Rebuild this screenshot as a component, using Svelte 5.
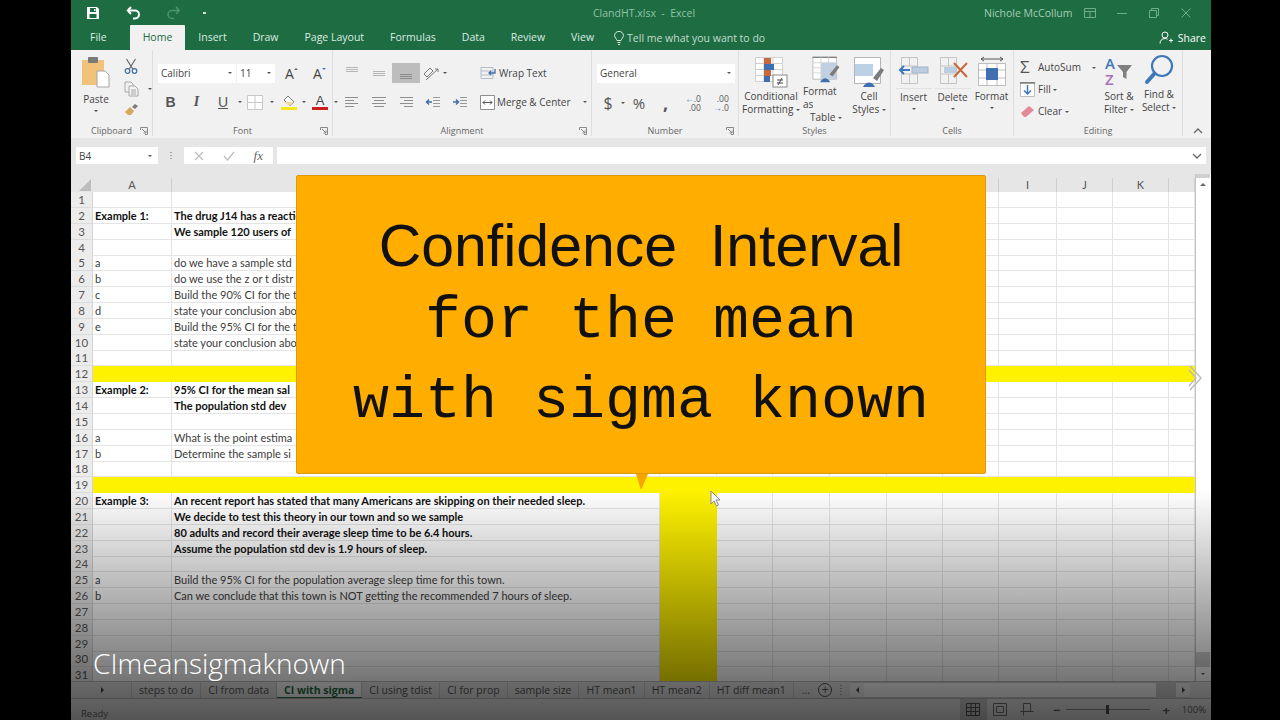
<script>
	const tabs = ['Insert', 'Draw', 'Page Layout', 'Formulas', 'Data', 'Review', 'View'];
	const columns = ['A', 'B', 'C', 'D', 'E', 'F', 'G', 'H', 'I', 'J', 'K', ''];
	const sheets = ['steps to do', 'CI from data', 'CI with sigma', 'CI using tdist', 'CI for prop', 'sample size', 'HT mean1', 'HT mean2', 'HT diff mean1'];

	// only the rows that hold something, the rest stay blank
	const cells = {
		2: ['Example 1:', 'The drug J14 has a reaction', true],
		3: ['', 'We sample 120 users of', true],
		5: ['a', 'do we have a sample std'],
		6: ['b', 'do we use the z or t distr'],
		7: ['c', 'Build the 90% CI for the t'],
		8: ['d', 'state your conclusion abo'],
		9: ['e', 'Build the 95% CI for the t'],
		10: ['', 'state your conclusion abo'],
		13: ['Example 2:', '95% CI for the mean sal', true],
		14: ['', 'The population std dev', true],
		16: ['a', 'What is the point estima'],
		17: ['b', 'Determine the sample si'],
		20: ['Example 3:', 'An recent report has stated that many Americans are skipping on their needed sleep.', true],
		21: ['', 'We decide to test this theory in our town and so we sample', true],
		22: ['', '80 adults and record their average sleep time to be 6.4 hours.', true],
		23: ['', 'Assume the population std dev is 1.9 hours of sleep.', true],
		25: ['a', 'Build the 95% CI for the population average sleep time for this town.'],
		26: ['b', 'Can we conclude that this town is NOT getting the recommended 7 hours of sleep.']
	};
	const rows = Array.from({ length: 31 }, (_, i) => i + 1);
	const blanks = Array.from({ length: 10 }, (_, i) => i);
</script>

{#snippet caret()}
	<span class="caret"></span>
{/snippet}

{#snippet launcher()}
	<svg class="launcher" width="8" height="8" viewBox="0 0 8 8" fill="none" stroke="#8a8a8a"><path d="M.5 3V.5H7.5V7.5H5M2 2l4 4M6 3.5V6H3.5"/></svg>
{/snippet}

{#snippet lines(kind)}
	<svg width="16" height="14" viewBox="0 0 16 14" stroke="#8f8f8f" fill="none">
		{#if kind === 'left'}
			<path d="M1 2.5h13M1 5.5h9M1 8.5h13M1 11.5h9"/>
		{:else if kind === 'center'}
			<path d="M1 2.5h14M3 5.5h10M1 8.5h14M3 11.5h10"/>
		{:else}
			<path d="M2 2.5h13M6 5.5h9M2 8.5h13M6 11.5h9"/>
		{/if}
	</svg>
{/snippet}

<div class="page">
	<div class="window">
		<header class="titlebar">
			<div class="qat">
				<svg class="qa-save" width="14" height="14" viewBox="0 0 14 14"><path fill="#fff" d="M1 1h10l2 2v10H1z"/><path fill="#1e6c42" d="M4 2h6v4H4zM3.500 8h7v4h-7z"/><path fill="#fff" d="M8 3h1.500v2H8z"/></svg>
				<svg class="qa-undo" width="16" height="14" viewBox="0 0 16 14" fill="none" stroke="#fff" stroke-width="2"><path d="M5 1 1.800 4.500 5 8"/><path d="M2 4.500h7a4 4 0 0 1 0 8H7"/></svg>
				<svg class="qa-redo" width="16" height="14" viewBox="0 0 16 14" fill="none" stroke="#4d9570" stroke-width="1.500"><path d="M11 1l3.200 3.500L11 8"/><path d="M14 4.500H7a4 4 0 0 0 0 8h2"/></svg>
				<span class="qa-more"></span>
			</div>
			<div class="doc-title">ClandHT.xlsx&nbsp; - &nbsp;Excel</div>
			<div class="user">Nichole McCollum</div>
			<div class="win-buttons">
				<svg width="12" height="10" viewBox="0 0 12 10" fill="none" stroke="#6fae8c"><path d="M.5.500h11v9H.5zM.5 3.500h11M6 3.500v6"/></svg>
				<svg width="12" height="10" viewBox="0 0 12 10" fill="none" stroke="#6fae8c"><path d="M1 5.500h10"/></svg>
				<svg width="12" height="10" viewBox="0 0 12 10" fill="none" stroke="#6fae8c"><path d="M1.500 2.500h7v7h-7zM3.500 2.500v-2h7v7h-2"/></svg>
				<svg width="12" height="10" viewBox="0 0 12 10" fill="none" stroke="#6fae8c"><path d="M1.500.500l9 9M10.500.500l-9 9"/></svg>
			</div>
		</header>

		<nav class="tabbar">
			<span class="tab file">File</span>
			<span class="tab active">Home</span>
			{#each tabs as tab}
				<span class="tab">{tab}</span>
			{/each}
			<svg class="bulb" width="10" height="14" viewBox="0 0 10 14" fill="none" stroke="#d5e8dd"><path d="M3 9.500C2.500 7.500.600 6.800.600 4.500a4.400 4.100 0 0 1 8.800 0C9.400 6.800 7.500 7.500 7 9.500zM3.500 11.500h3M4 13.500h2"/></svg>
			<span class="tell">Tell me what you want to do</span>
			<div class="share">
				<svg width="14" height="13" viewBox="0 0 14 13" fill="none" stroke="#fff"><circle cx="6" cy="4" r="3"/><path d="M1 12.500c0-3 2-5 5-5 1 0 2 .3 2.500.8M10 9.500h4M12 7.500v4"/></svg>
				<span>Share</span>
			</div>
		</nav>

		<section class="ribbon">
			<div class="group clipboard">
				<div class="body">
					<div class="paste">
						<svg width="30" height="32" viewBox="0 0 30 32">
							<rect x="1" y="4" width="22" height="25" fill="#f0c27a"/>
							<rect x="7" y="1" width="10" height="6" rx="1" fill="#7a7a7a"/>
							<path d="M16 15h8l4 4v12H16z" fill="#fff" stroke="#a6a6a6"/>
						</svg>
						<span class="label">Paste</span>
						{@render caret()}
					</div>
					<div class="clip-tools">
						<svg width="14" height="16" viewBox="0 0 14 16" fill="none" stroke="#3f6fa8" stroke-width="1.200"><circle cx="3.500" cy="13" r="2.300"/><circle cx="10.500" cy="13" r="2.300"/><path stroke="#666" d="M2.500 1l6.300 10M11.500 1 5.200 11"/></svg>
						<div class="copy-row">
							<svg width="15" height="16" viewBox="0 0 15 16" fill="none" stroke="#a8a8a8"><path d="M1 1h6l2 2v8H1z"/><path fill="#f1f1f1" d="M5 5h6l3 3v7H5z"/><path d="M7 9h5M7 11h5M7 13h5"/></svg>
							{@render caret()}
						</div>
						<svg width="14" height="12" viewBox="0 0 14 12"><path fill="#d9a860" d="M1 8l5-5 4 4-3 4H4z"/><path fill="#7b7b7b" d="M8 3l3-3 3 2-3 3z"/></svg>
					</div>
				</div>
				<div class="foot"><span>Clipboard</span>{@render launcher()}</div>
			</div>

			<div class="group font">
				<div class="body stack">
					<div class="row first font-row1">
						<div class="select name">Calibri<span class="caret"></span></div>
						<div class="select size">11<span class="caret"></span></div>
						<span class="grow">A<i></i></span>
						<span class="grow shrink">A<i></i></span>
					</div>
					<div class="row font-row2">
						<b class="fmt">B</b>
						<i class="fmt italic">I</i>
						<span class="fmt under">U</span>
						{@render caret()}
						<svg width="16" height="15" viewBox="0 0 16 15" fill="#fff" stroke="#c8c8c8"><path d="M.500.500h15v14H.500zM8 .500v14M.500 7.500h15"/></svg>
						{@render caret()}
						<div class="swatch">
							<svg width="14" height="12" viewBox="0 0 14 12"><path d="M6 1l6 6-4 4-6-6z" fill="#fff" stroke="#7a7a7a"/><path d="M2 7l6 4 4-4z" fill="#ebdf9a"/></svg>
							<span class="bar yellow"></span>
						</div>
						{@render caret()}
						<div class="swatch">
							<span class="fa">A</span>
							<span class="bar red"></span>
						</div>
						{@render caret()}
					</div>
				</div>
				<div class="foot"><span>Font</span>{@render launcher()}</div>
			</div>

			<div class="group alignment">
				<div class="body stack">
					<div class="row first align-row1">
						<svg width="16" height="14" viewBox="0 0 16 14" stroke="#b5b5b5" fill="none"><path d="M2 1.500h12M2 3.500h12M2 5.500h12"/></svg>
						<svg width="16" height="14" viewBox="0 0 16 14" stroke="#b5b5b5" fill="none"><path d="M2 5.500h12M2 7.500h12M2 9.500h12"/></svg>
						<div class="picked"><svg width="16" height="14" viewBox="0 0 16 14" stroke="#8c8c8c" fill="none"><path d="M2 8.500h12M2 10.500h12M2 12.500h12"/></svg></div>
						<div class="orient">
							<svg width="18" height="16" viewBox="0 0 18 16" fill="none" stroke="#7a7a7a"><path d="M1 9l6-6 3 3-6 6zM3 15 15 4M12 4h3v3"/></svg>
							{@render caret()}
						</div>
						<div class="wide-tool wrap">
							<svg width="17" height="14" viewBox="0 0 17 14" fill="none" stroke="#b3bccb"><path d="M1 1.500h12v11H1zM1 5h12M1 9h12"/><path stroke="#3f6fa8" stroke-width="1.300" d="M15 3v4H9M11 5 9 7l2 2"/></svg>
							<span>Wrap Text</span>
						</div>
					</div>
					<div class="row align-row2">
						{@render lines('left')}
						{@render lines('center')}
						{@render lines('right')}
						<svg width="16" height="14" viewBox="0 0 16 14" fill="none" stroke="#9a9a9a"><path d="M8 2.500h7M8 5.500h7M8 8.500h7M8 11.500h7"/><path stroke="#3f6fa8" stroke-width="1.500" d="M7 7H2M4 4.500 1.500 7 4 9.500"/></svg>
						<svg width="16" height="14" viewBox="0 0 16 14" fill="none" stroke="#9a9a9a"><path d="M8 2.500h7M8 5.500h7M8 8.500h7M8 11.500h7"/><path stroke="#3f6fa8" stroke-width="1.500" d="M1 7h5M4 4.500 6.500 7 4 9.500"/></svg>
						<div class="wide-tool merge">
							<svg width="15" height="15" viewBox="0 0 15 15" fill="#fff" stroke="#8f8f8f"><path d="M.500.500h14v14H.500z"/><path stroke="#555" d="M3 7.500h9M5 5.500l-2 2 2 2M10 5.500l2 2-2 2"/></svg>
							<span>Merge &amp; Center</span>
							{@render caret()}
						</div>
					</div>
				</div>
				<div class="foot"><span>Alignment</span>{@render launcher()}</div>
			</div>

			<div class="group number">
				<div class="body stack">
					<div class="row first">
						<div class="select general">General<span class="caret"></span></div>
					</div>
					<div class="row number-row2">
						<span class="dollar">$</span>
						{@render caret()}
						<span class="percent">%</span>
						<span class="comma">,</span>
						<div class="decimals"><span><em>←</em>.0</span><span>.00</span></div>
						<div class="decimals"><span>.00</span><span><em>→</em>.0</span></div>
					</div>
				</div>
				<div class="foot"><span>Number</span>{@render launcher()}</div>
			</div>

			<div class="group styles">
				<div class="body">
					<div class="big cond">
						<svg width="34" height="32" viewBox="0 0 34 32">
							<path d="M1.500 1.500h27v24h-27zM10 1.500v24M19 1.500v24M1.500 7.500h27M1.500 13.500h27M1.500 19.500h27" fill="#fff" stroke="#cfcfcf"/>
							<rect x="10" y="2" width="7" height="6" fill="#c9683a"/>
							<rect x="10" y="8" width="10" height="6" fill="#3f6fb0"/>
							<rect x="10" y="14" width="7" height="6" fill="#c9683a"/>
							<rect x="10" y="20" width="6" height="6" fill="#3f6fb0"/>
							<rect x="19" y="19" width="14" height="12" fill="#fff" stroke="#8a8a8a"/>
							<path d="M23 24h6M23 27h6M28 22l-4 7" stroke="#444" fill="none"/>
						</svg>
						<span>Conditional</span>
						<span>Formatting {@render caret()}</span>
					</div>
					<div class="big table">
						<svg width="34" height="32" viewBox="0 0 34 32">
							<path d="M1.500 1.500h28v26h-28z" fill="#fff" stroke="#b5b5b5"/>
							<path d="M1 1.500h29" stroke="#555"/>
							<rect x="11" y="8" width="18" height="19" fill="#bcd0e6"/>
							<path d="M1.500 8h28M1.500 14h28M1.500 20h28M11 1.500v26M20 1.500v26" stroke="#cfcfcf" fill="none"/>
							<path d="M10 31c3-6 9-6 12 0z" fill="#3f6fb0"/>
							<path d="M21 22l9-11 3 2-8 11z" fill="#7b7b7b"/>
						</svg>
						<span>Format as</span>
						<span>Table {@render caret()}</span>
					</div>
					<div class="big cell">
						<svg width="32" height="32" viewBox="0 0 32 32">
							<path d="M1.500 1.500h26v26h-26z" fill="#fff" stroke="#b5b5b5"/>
							<rect x="2" y="8" width="18" height="12" fill="#bcd0e6"/>
							<path d="M10 31c3-6 9-6 12 0z" fill="#3f6fb0"/>
							<path d="M20 22l8-10 3 2-7 11z" fill="#7b7b7b"/>
						</svg>
						<span>Cell</span>
						<span>Styles {@render caret()}</span>
					</div>
				</div>
				<div class="foot center"><span>Styles</span></div>
			</div>

			<div class="group cellsgroup">
				<div class="body">
					<div class="big split">
						<svg width="32" height="30" viewBox="0 0 32 30" fill="none">
							<path d="M3.500 1.500h16v26h-16zM3.500 10h16M3.500 18h16M11.500 1.500V10M11.500 18v9.500" stroke="#c4c4c4"/>
							<rect x="14" y="11" width="16" height="6" fill="#bccde0" stroke="#9fb2c8"/>
							<path d="M12 14H2M6 10 2 14l4 4" stroke="#3f78b8" stroke-width="2"/>
						</svg>
						<span class="rule"></span>
						<span>Insert</span>
						{@render caret()}
					</div>
					<div class="big split">
						<svg width="32" height="30" viewBox="0 0 32 30" fill="none">
							<path d="M3.500 1.500h16v26h-16zM3.500 10h16M3.500 18h16M11.500 1.500V10M11.500 18v9.500" stroke="#c4c4c4"/>
							<rect x="7" y="11" width="12" height="6" fill="#bccde0"/>
							<path d="M17 7l13 14M30 7 17 21" stroke="#c9683a" stroke-width="2"/>
						</svg>
						<span class="rule"></span>
						<span>Delete</span>
						{@render caret()}
					</div>
					<div class="big format">
						<svg width="30" height="32" viewBox="0 0 30 32" fill="none">
							<path d="M4 3h22M7 1 4 3l3 2M23 1l3 2-3 2" stroke="#555"/>
							<path d="M1.500 7.500h27v22h-27zM10 7.500v22M20 7.500v22M1.500 14h27M1.500 22h27" fill="#fff" stroke="#bdbdbd"/>
							<rect x="9" y="12" width="12" height="12" fill="#3f6fb0"/>
						</svg>
						<span>Format</span>
						{@render caret()}
					</div>
				</div>
				<div class="foot center"><span>Cells</span></div>
			</div>

			<div class="group editing">
				<div class="body">
					<div class="edit-col">
						<div class="edit-row"><span class="sigma">Σ</span><span>AutoSum</span><span class="push">{@render caret()}</span></div>
						<div class="edit-row">
							<svg width="15" height="15" viewBox="0 0 15 15" fill="none"><path d="M.500.500h14v14H.500z" fill="#fff" stroke="#bdbdbd"/><path d="M0 1h15" stroke="#444"/><path d="M7.500 3v9M4 8.500l3.500 3.500L11 8.500" stroke="#3f78b8" stroke-width="1.500"/></svg>
							<span>Fill {@render caret()}</span>
						</div>
						<div class="edit-row">
							<svg width="15" height="13" viewBox="0 0 15 13"><path d="M1 8l8-7 5 4-8 7H4z" fill="#e28a96"/></svg>
							<span>Clear {@render caret()}</span>
						</div>
					</div>
					<div class="big sort">
						<div class="az">
							<span class="a">A</span><span class="z">Z</span>
							<svg width="16" height="16" viewBox="0 0 16 16"><path d="M0 1h15L9.500 8v7L6 13V8z" fill="#808080"/></svg>
						</div>
						<span>Sort &amp;</span>
						<span>Filter {@render caret()}</span>
					</div>
					<div class="big find">
						<svg width="30" height="32" viewBox="0 0 30 32" fill="none"><circle cx="18" cy="12" r="10" stroke="#3f78b8" stroke-width="2.200"/><path d="M10.500 19.500 3 28" stroke="#3f78b8" stroke-width="4" stroke-linecap="round"/></svg>
						<span>Find &amp;</span>
						<span>Select {@render caret()}</span>
					</div>
				</div>
				<div class="foot center"><span>Editing</span></div>
			</div>

			<svg class="collapse" width="10" height="6" viewBox="0 0 10 6" fill="none" stroke="#666" stroke-width="1.300"><path d="M1 5l4-4 4 4"/></svg>
		</section>

		<section class="formulabar">
			<div class="namebox">B4<span class="caret"></span></div>
			<span class="grip"></span>
			<div class="fx-box">
				<svg width="10" height="10" viewBox="0 0 10 10" stroke="#bcbcbc" fill="none" stroke-width="1.200"><path d="M1 1l8 8M9 1 1 9"/></svg>
				<svg width="12" height="10" viewBox="0 0 12 10" stroke="#bcbcbc" fill="none" stroke-width="1.200"><path d="M1 5l3.500 4L11 1"/></svg>
				<i>fx</i>
			</div>
			<div class="formula">
				<svg width="10" height="6" viewBox="0 0 10 6" fill="none" stroke="#666" stroke-width="1.300"><path d="M1 1l4 4 4-4"/></svg>
			</div>
		</section>

		<section class="sheet">
			<div class="grid">
				<div class="line head">
					<div class="corner"><span class="tri"></span></div>
					{#each columns as col}
						<div class="colhead">{col}</div>
					{/each}
				</div>
				{#each rows as r}
					<div class="line" class:band={r === 12 || r === 19}>
						<div class="rowhead">{r}</div>
						<div class="cell-a" class:strong={cells[r]?.[2]}>{cells[r]?.[0] ?? ''}</div>
						<div class="cell-b" class:strong={cells[r]?.[2]}>{cells[r]?.[1] ?? ''}</div>
						<div class="blank" class:hl={r >= 19}></div>
						{#each blanks as b}
							<div class="blank"></div>
						{/each}
					</div>
				{/each}
			</div>
			<div class="vscroll">
				<span class="sb-btn"><span class="up"></span></span>
				<span class="sb-thumb"></span>
				<span class="sb-btn"><span class="caret"></span></span>
			</div>
		</section>

		<section class="sheetbar">
			<div class="sheet-nav"><span class="nav-next"></span></div>
			{#each sheets as name}
				<span class="sheet-tab" class:current={name === 'CI with sigma'}>{name}</span>
			{/each}
			<span class="more">...</span>
			<span class="add">+</span>
			<span class="grip dark"></span>
			<div class="hscroll">
				<span class="hs-btn"><span class="nav-prev"></span></span>
				<span class="hs-thumb"></span>
				<span class="hs-btn"><span class="nav-next"></span></span>
			</div>
		</section>

		<footer class="status">
			<span class="ready">Ready</span>
			<div class="views">
				<div class="view on"><svg width="14" height="13" viewBox="0 0 14 13" fill="none" stroke="#555"><path d="M.500.500h13v12H.500zM5 .500v12M9.500 .500v12M.500 4.500h13M.500 8.500h13"/></svg></div>
				<div class="view"><svg width="14" height="13" viewBox="0 0 14 13" fill="none" stroke="#777"><path d="M.500.500h13v12H.500zM3.500 3.500h7v6h-7z"/></svg></div>
				<div class="view"><svg width="14" height="13" viewBox="0 0 14 13" fill="none" stroke="#777"><path d="M.500 8.500h13M3.500.500v12M3.500.500h7v8"/></svg></div>
			</div>
			<span class="zoom-sign">−</span>
			<div class="slider"><span class="thumb"></span></div>
			<span class="zoom-sign">+</span>
			<span class="percent-zoom">100%</span>
		</footer>

		<div class="shade"></div>

		<div class="callout">
			<p class="headline">Confidence&nbsp; Interval</p>
			<p class="mono">for the mean</p>
			<p class="mono">with sigma known</p>
			<svg class="tail" width="12" height="17" viewBox="0 0 12 17"><path d="M0 0h12L5 16z" fill="#f4a500"/></svg>
		</div>

		<svg class="pointer" width="12" height="18" viewBox="0 0 12 18"><path d="M1 1v13l3-3 2.500 5 2-1-2.500-5h4z" fill="#f7f7f7" stroke="#8c8c8c"/></svg>
		<svg class="chevron" width="16" height="28" viewBox="0 0 16 28" fill="none" stroke="#bdbdbd" stroke-width="2"><path d="M2 2l11 12L2 26M1 6l7 8-7 8" stroke-width="1.500"/></svg>
		<div class="caption">CImeansigmaknown</div>
	</div>
</div>

<style>
	:global(body) {
		background: #000;
		font-family: "Open Sans", "Noto Sans", sans-serif;
	}
	p { margin: 0; }
	.page {
		width: 1280px;
		height: 720px;
		padding-left: 71px;
		box-sizing: border-box;
		background: #000;
		overflow: hidden;
	}
	.window {
		position: relative;
		width: 1140px;
		height: 720px;
		display: flex;
		flex-direction: column;
		background: #f1f1f1;
		color: #444;
		font-size: 10px;
		overflow: hidden;
	}

	/* title + tabs */
	.titlebar {
		height: 25px;
		flex: none;
		display: flex;
		align-items: center;
		background: #1e6c42;
	}
	.qat { display: flex; align-items: center; width: 522px; padding-left: 15px; box-sizing: border-box; }
	.qa-undo { margin-left: 26px; }
	.qa-redo { margin-left: 23px; }
	.qa-more { width: 3px; height: 2px; margin-left: 22px; background: #cfe3d8; }
	.doc-title { width: 391px; color: #8ec3a5; font-size: 10.500px; }
	.user { width: 100px; color: #a5cdb6; font-size: 10.500px; }
	.win-buttons { display: flex; gap: 20px; }

	.tabbar {
		height: 25px;
		flex: none;
		display: flex;
		align-items: center;
		padding-left: 6px;
		background: #1e6c42;
		color: #dcebe3;
		font-size: 10.500px;
	}
	.tab { padding: 0 13px; height: 25px; line-height: 25px; }
	.tab.file { margin-right: 10px; }
	.tab.active { background: #f1f1f1; color: #22693f; border-radius: 1px 1px 0 0; }
	.bulb { margin-left: 7px; }
	.tell { margin-left: 3px; color: #c2dccd; }
	.share { margin-left: auto; margin-right: 5px; display: flex; align-items: center; gap: 5px; color: #fff; }

	/* ribbon */
	.ribbon {
		height: 88px;
		flex: none;
		display: flex;
		background: #f1f1f1;
		font-size: 10px;
	}
	.group {
		display: flex;
		flex-direction: column;
		flex: none;
		box-sizing: border-box;
		border-right: 1px solid #dedede;
		margin-bottom: 2px;
	}
	.body { height: 74px; flex: none; display: flex; }
	.stack { flex-direction: column; padding: 13px 0 0 5px; box-sizing: border-box; }
	.foot {
		height: 12px;
		display: flex;
		align-items: center;
		justify-content: center;
		position: relative;
		color: #666;
		font-size: 9px;
	}
	.launcher { position: absolute; right: 4px; top: 3px; }
	.caret {
		display: inline-block;
		width: 0;
		height: 0;
		border-left: 2px solid transparent;
		border-right: 2px solid transparent;
		border-top: 2px solid #555;
		vertical-align: middle;
	}
	.row { display: flex; align-items: center; height: 20px; }
	.row.first { margin-bottom: 9px; }
	.clipboard { width: 82px; }
	.paste {
		width: 42px;
		margin-left: 5px;
		padding-top: 6px;
		display: flex;
		flex-direction: column;
		align-items: center;
	}
	.paste .label { margin-top: 4px; line-height: 14px; }
	.paste .caret { margin-top: 4px; }
	.clip-tools {
		display: flex;
		flex-direction: column;
		align-items: flex-start;
		gap: 7px;
		padding: 8px 0 0 8px;
	}
	.copy-row { display: flex; align-items: center; gap: 9px; }

	.font { width: 180px; }
	.select {
		height: 19px;
		line-height: 19px;
		padding-left: 3px;
		background: #fff;
		box-sizing: border-box;
		display: flex;
		align-items: center;
		justify-content: space-between;
		padding-right: 4px;
	}
	.select.name { width: 78px; margin-right: 1px; }
	.select.size { width: 38px; }
	.grow { position: relative; width: 27px; text-align: center; font-size: 14px; margin-left: 1px; }
	.grow i {
		position: absolute;
		left: 18px;
		top: 4px;
		width: 0;
		height: 0;
		border-left: 2px solid transparent;
		border-right: 2px solid transparent;
		border-bottom: 2px solid #666;
	}
	.shrink i { border-bottom: 0; border-top: 2px solid #3f78b8; }
	.font-row2 {
		display: grid;
		grid-template-columns: 25px 27px 26px 8px 22px 12px 22px 8px 24px 8px;
		justify-items: center;
	}
	.fmt { font-size: 14px; color: #555; font-family: "Liberation Sans", sans-serif; }
	.italic { font-family: "Liberation Serif", serif; font-weight: 700; }
	.under { text-decoration: underline; }
	.swatch { display: flex; flex-direction: column; align-items: center; }
	.fa { font-size: 13px; line-height: 13px; color: #444; font-family: "Liberation Sans", sans-serif; }
	.bar { display: block; width: 16px; height: 3px; }
	.yellow { background: #f6e61c; }
	.red { background: #cc1f1f; }

	.alignment { width: 259px; }
	.align-row1, .align-row2 {
		display: grid;
		grid-template-columns: 27px 27px 27px 27px 27px auto;
		justify-items: center;
		align-items: center;
	}
	.align-row1 { grid-template-columns: 27px 27px 28px 30px auto; }
	.picked {
		width: 28px;
		height: 20px;
		background: #bdbdbd;
		display: flex;
		align-items: center;
		justify-content: center;
	}
	.orient { display: flex; align-items: center; gap: 2px; }
	.wide-tool { display: flex; align-items: center; gap: 2px; font-size: 10px; }
	.wrap { margin-left: 30px; justify-self: start; }
	.merge { margin-left: 7px; justify-self: start; }
	.merge .caret { margin-left: 10px; }

	.number { width: 147px; }
	.select.general { width: 138px; }
	.number-row2 {
		display: grid;
		grid-template-columns: 22px 7px 26px 27px 28px 28px;
		justify-items: center;
		color: #555;
	}
	.dollar { font-size: 16px; }
	.percent { font-size: 15px; }
	.comma { font-size: 18px; font-weight: 700; line-height: 12px; }
	.decimals {
		display: flex;
		flex-direction: column;
		align-items: flex-end;
		font-size: 8.500px;
		line-height: 9px;
	}
	.decimals em { font-style: normal; color: #3f78b8; }

	.styles { width: 152px; }
	.big {
		display: flex;
		flex-direction: column;
		align-items: center;
		padding-top: 6px;
		line-height: 13px;
		flex: none;
		box-sizing: border-box;
	}
	.big svg { margin-bottom: 2px; }
	.cond { width: 64px; }
	.table { width: 46px; }
	.cell { width: 40px; }
	.cellsgroup { width: 123px; }
	.cellsgroup .body { padding-left: 3px; }
	.split { width: 39px; padding-top: 6px; }
	.split .rule { width: 36px; height: 1px; background: #e2e2e2; margin-bottom: 2px; }
	.split .caret { margin-top: 4px; }
	.format { width: 39px; }
	.format .caret { margin-top: 4px; }

	.editing { width: 169px; }
	.edit-col { width: 84px; padding: 6px 0 0 6px; box-sizing: border-box; display: flex; flex-direction: column; }
	.edit-row { display: flex; align-items: center; gap: 3px; height: 22px; }
	.sigma { font-size: 17px; line-height: 16px; color: #555; width: 15px; }
	.push { margin-left: 8px; }
	.sort { width: 42px; padding-top: 6px; }
	.find { width: 38px; padding-top: 4px; }
	.az {
		display: grid;
		grid-template-columns: 12px 16px;
		height: 32px;
		margin-bottom: 2px;
		font-size: 15px;
		line-height: 14px;
		font-weight: 600;
	}
	.az .a { color: #3f78b8; grid-column: 1; grid-row: 1; }
	.az .z { color: #a86fb8; grid-column: 1; grid-row: 2; }
	.az svg { grid-column: 2; grid-row: 1 / 3; margin-top: 8px; }
	.collapse { margin: 78px 0 0 10px; }

	/* formula bar */
	.formulabar {
		height: 36px;
		flex: none;
		box-sizing: border-box;
		padding: 9px 5px 10px 5px;
		display: flex;
		align-items: stretch;
		background: #e6e6e6;
	}
	.namebox {
		width: 82px;
		background: #fff;
		padding: 0 6px 0 3px;
		box-sizing: border-box;
		display: flex;
		align-items: center;
		justify-content: space-between;
		font-size: 10px;
	}
	.grip {
		width: 2px;
		margin: 5px 12px;
		background-image: linear-gradient(#a8a8a8 50%, transparent 50%);
		background-size: 2px 3px;
	}
	.fx-box {
		width: 89px;
		background: #fff;
		padding: 0 10px 0 10px;
		box-sizing: border-box;
		display: flex;
		align-items: center;
		justify-content: space-between;
		margin-right: 4px;
	}
	.fx-box i { font-family: "Liberation Serif", serif; font-size: 13px; color: #666; }
	.formula {
		flex: 1;
		background: #fff;
		display: flex;
		align-items: center;
		justify-content: flex-end;
		padding-right: 4px;
	}

	/* sheet */
	.sheet { flex: none; display: flex; height: 507px; background: #fff; }
	.grid { width: 1124px; flex: none; background: #e6e6e6; }
	.line {
		display: grid;
		grid-template-columns: 22px 79px 488px 57px 56px 57px 57px 56px 56px 58px 56px 56px 26px;
		height: 15.850px;
		background: #fff;
		font-family: Lato, sans-serif;
		font-size: 11px;
		line-height: 15px;
		color: #3c3c3c;
	}
	.head { height: 14px; background: #e6e6e6; margin-top: 4px; color: #555; font-size: 11px; line-height: 14px; }
	.corner { position: relative; }
	.tri {
		position: absolute;
		right: 2px;
		bottom: 1px;
		border-left: 12px solid transparent;
		border-bottom: 12px solid #bdbdbd;
	}
	.colhead { text-align: center; border-right: 1px solid #cfcfcf; }
	.rowhead {
		background: #ececec;
		text-align: center;
		color: #555;
		font-size: 11.500px;
		border-right: 1px solid #d4d4d4;
		border-bottom: 1px solid #dcdcdc;
		box-sizing: border-box;
	}
	.cell-a, .cell-b, .blank {
		border-right: 1px solid #e4e4e4;
		border-bottom: 1px solid #e4e4e4;
		box-sizing: border-box;
		padding-left: 2px;
		white-space: nowrap;
		overflow: hidden;
	}
	.strong { font-weight: 700; color: #111; }
	.band > :not(.rowhead) { background: #fff200; border-color: #fff200; }
	.hl { background: #fff200; border-color: #fff200; }

	.vscroll {
		width: 15px;
		flex: none;
		display: flex;
		flex-direction: column;
		background: #d0d0d0;
		border-left: 1px solid #c4c4c4;
		box-sizing: border-box;
		padding-top: 4px;
	}
	.sb-btn {
		height: 14px;
		background: #fff;
		display: flex;
		align-items: center;
		justify-content: center;
	}
	.up {
		border-left: 3px solid transparent;
		border-right: 3px solid transparent;
		border-bottom: 3px solid #666;
	}
	.sb-thumb { height: 464px; background: #fff; margin-bottom: 15px; }

	.sheetbar {
		height: 16px;
		flex: none;
		display: flex;
		align-items: center;
		background: #e6e6e6;
		border-top: 1px solid #bbb;
		border-bottom: 1px solid #bbb;
		font-size: 10.500px;
		color: #555;
		box-sizing: content-box;
	}
	.sheet-nav { width: 61px; display: flex; justify-content: center; border-right: 1px solid #ccc; height: 16px; align-items: center; box-sizing: border-box; padding-left: 2px; }
	.nav-next, .nav-prev {
		display: block;
		border-top: 3px solid transparent;
		border-bottom: 3px solid transparent;
		border-left: 3px solid #444;
	}
	.nav-prev { border-left: 0; border-right: 3px solid #444; }
	.sheet-tab {
		padding: 0 7px;
		height: 16px;
		line-height: 16px;
		border-right: 1px solid #ccc;
		white-space: nowrap;
	}
	.sheet-tab.current {
		background: #fff;
		color: #1e6c42;
		font-weight: 700;
		border-bottom: 1px solid #1e6c42;
		box-sizing: border-box;
	}
	.more { margin-left: 8px; }
	.add {
		width: 12px;
		height: 12px;
		margin-left: 8px;
		border: 1px solid #555;
		border-radius: 50%;
		line-height: 11px;
		text-align: center;
		font-size: 12px;
	}
	.grip.dark { height: 10px; margin: 0 8px; }
	.hscroll { display: flex; align-items: center; flex: 1; background: #cfcfcf; height: 16px; margin-right: 21px; }
	.hs-btn { width: 14px; height: 14px; background: #f4f4f4; display: flex; align-items: center; justify-content: center; flex: none; }
	.hs-thumb { width: 292px; height: 14px; background: #fff; margin-right: auto; }

	.status {
		flex: 1;
		display: flex;
		align-items: center;
		padding: 0 5px 0 10px;
		background: #f1f1f1;
		font-size: 9.500px;
		color: #666;
	}
	.ready { margin-right: auto; padding-top: 8px; }
	.views { display: flex; }
	.view { width: 27px; height: 21px; display: flex; align-items: center; justify-content: center; }
	.view.on { background: #d0d0d0; }
	.zoom-sign { font-size: 13px; font-weight: 700; margin: 0 6px 0 12px; }
	.slider { width: 84px; height: 1px; background: #999; position: relative; }
	.thumb { position: absolute; left: 40px; top: -4px; width: 3px; height: 9px; background: #555; }
	.percent-zoom { margin-left: 6px; }

	/* overlays */
	.shade {
		position: absolute;
		left: 0;
		right: 0;
		top: 490px;
		bottom: 0;
		background: linear-gradient(rgba(0, 0, 0, 0), rgba(0, 0, 0, 0.65));
		pointer-events: none;
	}
	.callout {
		position: absolute;
		left: 225px;
		top: 175px;
		width: 690px;
		height: 299px;
		box-sizing: border-box;
		background: #ffae00;
		border: 1px solid #e09a08;
		border-radius: 2px;
		color: #111;
		text-align: center;
	}
	.headline {
		margin-top: 35px;
		font-family: "Liberation Sans", sans-serif;
		font-size: 59px;
		line-height: 70px;
	}
	.mono {
		font-family: "Liberation Mono", monospace;
		font-size: 60px;
		line-height: 80px;
	}
	.tail { position: absolute; left: 339px; top: 298px; }
	.pointer { position: absolute; left: 639px; top: 490px; }
	.chevron { position: absolute; left: 1117px; top: 364px; }
	.caption {
		position: absolute;
		left: 22px;
		top: 645px;
		color: #fff;
		font-family: "Open Sans", sans-serif;
		font-weight: 300;
		font-size: 28px;
		line-height: 36px;
	}
</style>
